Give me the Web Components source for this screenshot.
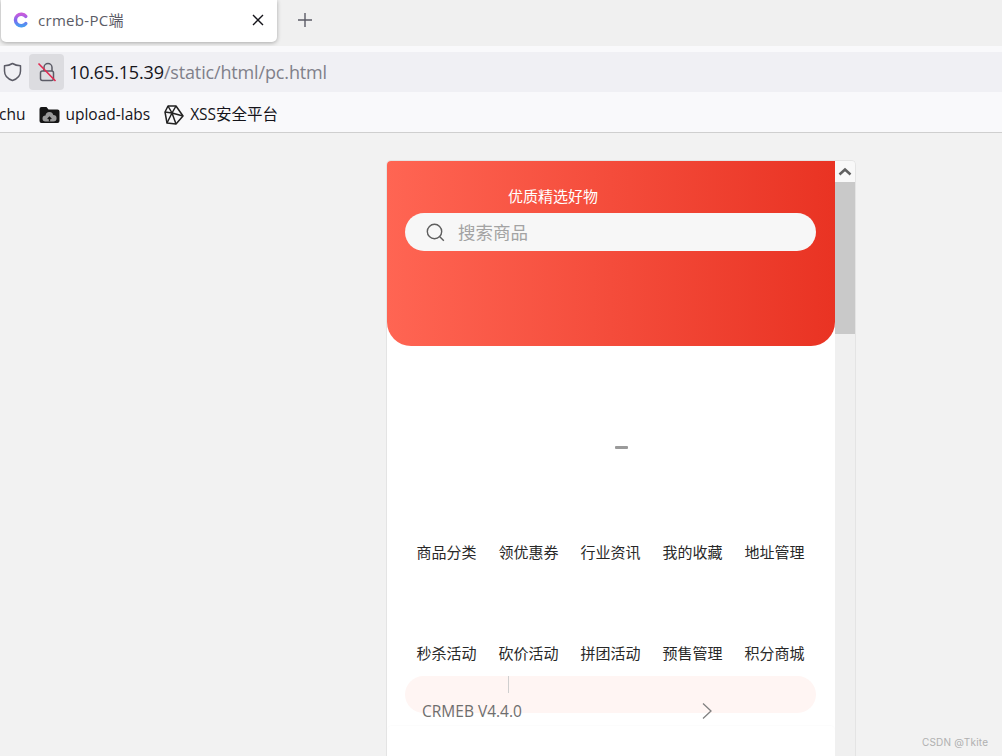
<!DOCTYPE html>
<html lang="zh">
<head>
<meta charset="utf-8">
<title>crmeb-PC端</title>
<style>
  html, body { margin: 0; height: 100%; overflow: hidden; }
  body {
    background: #f2f2f2;
    font-family: "Open Sans", "Noto Sans CJK SC", sans-serif;
    display: flex;
    flex-direction: column;
    height: 756px;
    position: relative;
  }
</style>
</head>
<body>
<browser-tabs></browser-tabs>
<browser-toolbar></browser-toolbar>
<browser-bookmarks></browser-bookmarks>
<phone-frame>
  <shop-header title-text="优质精选好物" placeholder="搜索商品"></shop-header>
  <banner-dash></banner-dash>
  <menu-grid>
    <menu-item>商品分类</menu-item>
    <menu-item>领优惠券</menu-item>
    <menu-item>行业资讯</menu-item>
    <menu-item>我的收藏</menu-item>
    <menu-item>地址管理</menu-item>
    <menu-item>秒杀活动</menu-item>
    <menu-item>砍价活动</menu-item>
    <menu-item>拼团活动</menu-item>
    <menu-item>预售管理</menu-item>
    <menu-item>积分商城</menu-item>
  </menu-grid>
  <notice-pill>CRMEB V4.4.0</notice-pill>
  <lower-card></lower-card>
</phone-frame>
<water-mark>CSDN @Tkite</water-mark>

<script>
class BrowserTabs extends HTMLElement {
  connectedCallback() {
    this.attachShadow({ mode: "open" })
    this.shadowRoot.innerHTML = `
      <style>
        :host { display: flex; align-items: flex-start; height: 46px; background: #f0f0f0; flex: none; }
        .tab {
          width: 276px; height: 42px; margin-left: 1px; box-sizing: border-box;
          background: #fff; border-radius: 0 0 5px 5px;
          box-shadow: 0 1px 4px rgba(0,0,0,.3);
          display: flex; align-items: center; padding: 0 13px 3px 12px;
          font-size: 15px; color: #5b5b66;
        }
        .title { margin-left: 9px; flex: 1; letter-spacing: .3px; }
        .plus { margin: 12px 0 0 20px; display: block; }
        svg { display: block; flex: none; }
      </style>
      <div class="tab">
        <svg width="16" height="16" viewBox="0 0 16 16">
          <defs><linearGradient id="c" x1="0" y1="0" x2="0" y2="1">
            <stop offset="0" stop-color="#c75bdc"/><stop offset=".55" stop-color="#7a6cf0"/><stop offset="1" stop-color="#4a9af0"/>
          </linearGradient></defs>
          <path d="M12.800 4.400A5.800 5.800 0 1 0 12.800 11.600" fill="none" stroke="url(#c)" stroke-width="3.400" stroke-linecap="round"/>
        </svg>
        <span class="title">crmeb-PC端</span>
        <svg width="12" height="12" viewBox="0 0 12 12"><path d="M1 1L11 11M11 1L1 11" stroke="#15141a" stroke-width="1.400"/></svg>
      </div>
      <svg class="plus" width="16" height="16" viewBox="0 0 16 16"><path d="M8 1V15M1 8H15" stroke="#5b5b66" stroke-width="1.400"/></svg>
    `
  }
}

class BrowserToolbar extends HTMLElement {
  connectedCallback() {
    this.attachShadow({ mode: "open" })
    this.shadowRoot.innerHTML = `
      <style>
        :host { display: block; flex: none; background: #f9f9fb; padding-top: 6px; }
        .bar { height: 40px; background: #f0f0f4; display: flex; align-items: center; padding-left: 3px; }
        .lock {
          width: 35px; height: 36px; margin-left: 7px; border-radius: 4px; background: #dcdce0;
          display: flex; align-items: center; justify-content: center;
        }
        .url { margin-left: 5px; font-size: 18px; color: #15141a; letter-spacing: -.15px; margin-top: -1px; }
        .url span { color: #80808a; }
        svg { display: block; flex: none; }
      </style>
      <div class="bar">
        <svg width="19" height="20" viewBox="0 0 19 20"><path d="M9.500 1.500C7 3 4.500 3.600 1.500 3.800V9c0 4.500 3.500 8 8 9.500 4.500-1.500 8-5 8-9.500V3.800C14.500 3.600 12 3 9.500 1.500Z" fill="none" stroke="#5b5b66" stroke-width="1.500" stroke-linejoin="round"/></svg>
        <div class="lock">
          <svg width="20" height="22" viewBox="0 0 20 22">
            <path d="M7 10V6.500a4 4 0 0 1 8 0V10" fill="none" stroke="#5b5b66" stroke-width="1.500"/>
            <rect x="3.500" y="10" width="13" height="9.500" rx="2" fill="none" stroke="#5b5b66" stroke-width="1.500"/>
            <path d="M1.500 2.500L18.500 20" stroke="#e22850" stroke-width="1.600"/>
          </svg>
        </div>
        <div class="url">10.65.15.39<span>/static/html/pc.html</span></div>
      </div>
    `
  }
}

class BrowserBookmarks extends HTMLElement {
  connectedCallback() {
    this.attachShadow({ mode: "open" })
    this.shadowRoot.innerHTML = `
      <style>
        :host {
          display: flex; align-items: center; flex: none; height: 37px; padding-top: 3px; background: #f9f9fb;
          border-bottom: 1px solid #cfcfcf; font-size: 15.500px; color: #15141a; overflow: hidden;
        }
        span { white-space: nowrap; }
        svg { display: block; flex: none; margin-top: 2px; }
        .chu { margin-left: -1px; }
        .up { margin-left: 14px; }
        .up + span { margin-left: 5px; }
        .xss { margin-left: 14px; }
        .xss + span { margin-left: 6px; }
      </style>
      <span class="chu">chu</span>
      <svg class="up" width="21" height="18" viewBox="0 0 21 18">
        <path d="M.5 3a2 2 0 0 1 2-2h5l2 2.500H18.500a2 2 0 0 1 2 2V15a2 2 0 0 1-2 2h-16a2 2 0 0 1-2-2Z" fill="#161616"/>
        <path d="M6.500 15.500a3 3 0 0 1 0-6 4 4 0 0 1 7.800-.5 3.200 3.200 0 0 1 0 6.500Z" fill="#9a9a9a"/>
        <path d="M10.500 15.500V11.500M8.700 13L10.500 11.200 12.300 13" stroke="#161616" stroke-width="1.300" fill="none"/>
      </svg>
      <span>upload-labs</span>
      <svg class="xss" width="20" height="20" viewBox="0 0 20 20" fill="none" stroke="#222" stroke-width="1.500" stroke-linejoin="round">
        <path d="M4 1L12 1L19 11L12 19L3 18L1 7Z"/>
        <path d="M4 1L8 8L12 1M1 7L8 8L19 11M8 8L3 18M8 8L12 19"/>
      </svg>
      <span>XSS安全平台</span>
    `
  }
}

class PhoneFrame extends HTMLElement {
  connectedCallback() {
    this.attachShadow({ mode: "open" })
    this.shadowRoot.innerHTML = `
      <style>
        :host { display: block; flex: 1; min-height: 0; padding: 27px 0 0 386px; overflow: hidden; }
        .frame {
          width: 470px; height: 600px; box-sizing: border-box;
          display: flex; border: 1px solid #e4e4e4; border-bottom: 0; border-radius: 5px 5px 0 0;
          background: #fff; overflow: hidden;
        }
        .page { width: 448px; flex: none; background: #fff; }
        .scroll { width: 20px; flex: none; background: #f0f0f0; display: flex; flex-direction: column; }
        .btn { height: 21px; background: #f8f8f8; display: flex; align-items: center; justify-content: center; }
        .thumb { height: 152px; background: #c9c9c9; }
      </style>
      <div class="frame">
        <div class="page"><slot></slot></div>
        <div class="scroll">
          <div class="btn"><svg width="14" height="9" viewBox="0 0 14 9"><path d="M1.500 7.500L7 2.500L12.500 7.500" fill="none" stroke="#606060" stroke-width="2.500"/></svg></div>
          <div class="thumb"></div>
        </div>
      </div>
    `
  }
}

class ShopHeader extends HTMLElement {
  connectedCallback() {
    this.attachShadow({ mode: "open" })
    this.shadowRoot.innerHTML = `
      <style>
        :host {
          display: block; height: 185px; box-sizing: border-box; padding: 26px 19px 0 18px;
          background: linear-gradient(90deg, #ff6553 0%, #e93323 100%);
          border-radius: 0 0 24px 24px;
        }
        .title { margin-left: 103px; height: 26px; line-height: 18px; font-size: 15px; color: #fff; }
        .search {
          height: 38px; border-radius: 19px; background: #f7f7f7;
          display: flex; align-items: center; padding-left: 21px;
          font-size: 17.500px; color: #a3a3a3;
        }
        span { margin-top: -1px; }
        svg { display: block; margin-right: 13px; flex: none; }
      </style>
      <div class="title">${this.getAttribute("title-text")}</div>
      <div class="search">
        <svg width="19" height="19" viewBox="0 0 19 19" fill="none" stroke="#5e5e5e" stroke-width="1.400">
          <circle cx="8.500" cy="8.500" r="7.200"/><path d="M13.800 13.800L17.800 17.800"/>
        </svg>
        <span>${this.getAttribute("placeholder")}</span>
      </div>
    `
  }
}

class BannerDash extends HTMLElement {
  connectedCallback() {
    this.attachShadow({ mode: "open" })
    this.shadowRoot.innerHTML = `
      <style>
        :host { display: block; padding: 100px 0 0 228px; }
        div { width: 13px; height: 3px; background: #9a9a9a; border-radius: 1px; }
      </style>
      <div></div>
    `
  }
}

class MenuGrid extends HTMLElement {
  connectedCallback() {
    this.attachShadow({ mode: "open" })
    this.shadowRoot.innerHTML = `
      <style>
        :host {
          display: grid; grid-template-columns: repeat(5, 82px); grid-auto-rows: 101px;
          padding: 53px 0 0 18.500px; height: 227px; box-sizing: border-box;
        }
      </style>
      <slot></slot>
    `
  }
}

class MenuItem extends HTMLElement {
  connectedCallback() {
    this.attachShadow({ mode: "open" })
    this.shadowRoot.innerHTML = `
      <style>
        :host { display: block; text-align: center; font-size: 15px; line-height: 100px; height: 101px; color: #282828; white-space: nowrap; }
      </style>
      <slot></slot>
    `
  }
}

class NoticePill extends HTMLElement {
  connectedCallback() {
    this.attachShadow({ mode: "open" })
    this.shadowRoot.innerHTML = `
      <style>
        :host { display: block; height: 37px; margin: 0 19px 0 18px; background: #fff5f3; border-radius: 18.500px; }
        .line { width: 1px; height: 17px; margin-left: 103px; background: #cfcfcf; }
        .row { display: flex; align-items: center; height: 36px; padding-left: 17px; font-size: 15.500px; color: #6e6e6e; }
        .text { width: 279px; }
        svg { display: block; }
      </style>
      <div class="line"></div>
      <div class="row">
        <span class="text"><slot></slot></span>
        <svg width="12" height="18" viewBox="0 0 12 18"><path d="M2 1.500L10 9L2 16.500" fill="none" stroke="#808080" stroke-width="1.300"/></svg>
      </div>
    `
  }
}

class LowerCard extends HTMLElement {
  connectedCallback() {
    this.attachShadow({ mode: "open" })
    this.shadowRoot.innerHTML = `
      <style>
        :host { display: block; height: 60px; margin-top: 13px; background: #fff; border-radius: 5px 5px 0 0; box-shadow: 0 -1px 1px rgba(0,0,0,.015); }
      </style>
    `
  }
}

class WaterMark extends HTMLElement {
  connectedCallback() {
    this.attachShadow({ mode: "open" })
    this.shadowRoot.innerHTML = `
      <style>
        :host { position: absolute; left: 922px; top: 736px; font-family: "Inter", sans-serif; font-size: 10px; line-height: 13px; color: #b0b0b0; letter-spacing: .2px; white-space: nowrap; }
      </style>
      <slot></slot>
    `
  }
}

customElements.define("browser-tabs", BrowserTabs)
customElements.define("browser-toolbar", BrowserToolbar)
customElements.define("browser-bookmarks", BrowserBookmarks)
customElements.define("phone-frame", PhoneFrame)
customElements.define("shop-header", ShopHeader)
customElements.define("banner-dash", BannerDash)
customElements.define("menu-grid", MenuGrid)
customElements.define("menu-item", MenuItem)
customElements.define("notice-pill", NoticePill)
customElements.define("lower-card", LowerCard)
customElements.define("water-mark", WaterMark)
</script>
</body>
</html>
